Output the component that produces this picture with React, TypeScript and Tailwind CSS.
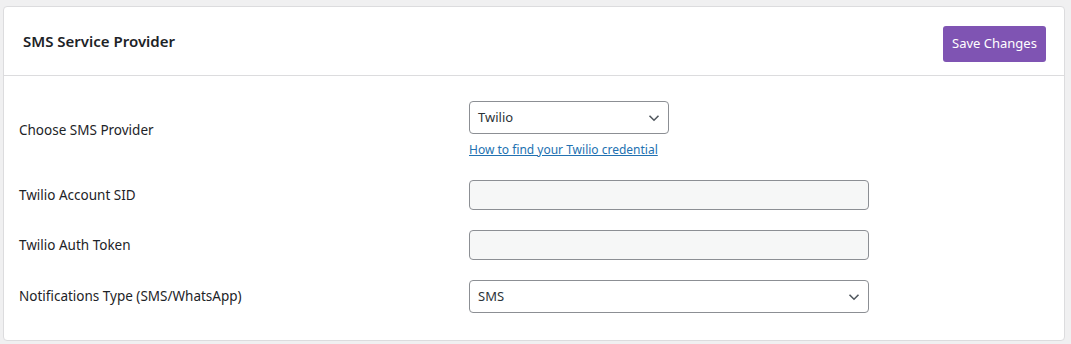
import React from "react"

function Chevron() {
    return (
        <svg width="12" height="8" viewBox="0 0 12 8" fill="none" className="shrink-0">
            <path d="M1.5 1.8 6 6.2 10.5 1.8" stroke="#50575e" strokeWidth="1.6" />
        </svg>
    )
}

function Select({ value, width }: { value: string, width: string }) {
    return (
        <div className={`${width} h-[33px] flex items-center justify-between pl-[8px] pr-[8px] bg-white border border-[#8c8f94] rounded-[4px] text-[13px] text-[#2c3338]`}>
            <span>{value}</span>
            <Chevron />
        </div>
    )
}

function Row({ label, children }: { label: string, children: React.ReactNode }) {
    return (
        <div className="flex items-center py-[10px]">
            <div className="w-[450px] shrink-0 text-[13.5px] text-[#1d2327]">{label}</div>
            <div>{children}</div>
        </div>
    )
}

export default function App() {
    return (
        <div className="min-h-[344px] bg-[#f0f0f1] pt-[6px] px-[3px] font-['Noto_Sans',sans-serif]">
            <div className="w-[1062px] bg-white border border-[#dcdcde] rounded-[4px]">

                <div className="h-[69px] flex items-center justify-between pl-[19px] pr-[18px] border-b border-[#dcdcde]">
                    <h2 className="text-[15px] font-semibold text-[#1d2327]">SMS Service Provider</h2>
                    <button className="w-[103px] h-[36px] mt-[6px] bg-[#7f54b3] rounded-[3px] text-white text-[13px]">Save Changes</button>
                </div>

                <div className="pl-[15px] pt-[15px] pb-[17px]">
                    <Row label="Choose SMS Provider">
                        <Select value="Twilio" width="w-[200px]" />
                        <a href="#" className="block mt-[6px] leading-[20px] text-[12px] text-[#2271b1] underline">How to find your Twilio credential</a>
                    </Row>
                    <Row label="Twilio Account SID">
                        <input className="block w-[400px] h-[30px] bg-[#f6f7f7] border border-[#8c8f94] rounded-[4px]" />
                    </Row>
                    <Row label="Twilio Auth Token">
                        <input className="block w-[400px] h-[30px] bg-[#f6f7f7] border border-[#8c8f94] rounded-[4px]" />
                    </Row>
                    <Row label="Notifications Type (SMS/WhatsApp)">
                        <Select value="SMS" width="w-[400px]" />
                    </Row>
                </div>
            </div>
        </div>
    )
}
